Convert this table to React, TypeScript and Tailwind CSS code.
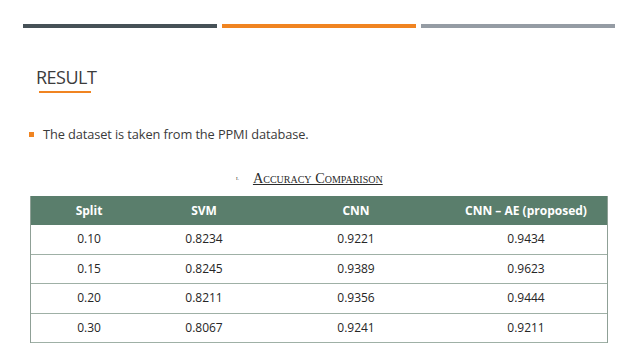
import React from "react";

const rows = [
  ["0.10", "0.8234", "0.9221", "0.9434"],
  ["0.15", "0.8245", "0.9389", "0.9623"],
  ["0.20", "0.8211", "0.9356", "0.9444"],
  ["0.30", "0.8067", "0.9241", "0.9211"],
];

export default function App() {
  return (
    <div
      className="w-[638px] h-[359px] bg-white overflow-hidden text-[#404040]"
      style={{ fontFamily: '"Open Sans", "Noto Sans", sans-serif' }}
    >
      <div className="flex gap-[5px] px-[23px] pt-[24px]">
        <div className="h-[4px] flex-1 bg-[#465157]" />
        <div className="h-[4px] flex-1 bg-[#f08421]" />
        <div className="h-[4px] flex-1 bg-[#959ca4]" />
      </div>

      <div className="pl-[36px] pt-[38px]">
        <div className="inline-flex flex-col items-start">
          <div className="text-[18px] leading-[22px] tracking-[-0.5px] text-[#3c3c3c]">RESULT</div>
          <div className="ml-[3px] mt-[3px] h-[2px] w-[52px] bg-[#f08421]" />
        </div>
      </div>

      <div className="flex items-center pl-[29px] mt-[32px]">
        <div className="w-[5px] h-[5px] bg-[#f08421]" />
        <div className="ml-[9px] text-[12.8px] leading-[18px] text-[#3a3a3a] tracking-[-0.1px]">
          The dataset is taken from the PPMI database.
        </div>
      </div>

      <div
        className="flex items-end mt-[26px] pl-[236px] text-[#2a2a2a]"
        style={{ fontFamily: '"Liberation Serif", serif' }}
      >
        <span className="text-[5px] mr-[14px] mb-[5px]">I.</span>
        <span
          className="text-[14.3px] leading-[18px] underline underline-offset-[1px]"
          style={{ fontVariant: "small-caps" }}
        >
          Accuracy Comparison
        </span>
      </div>

      <div className="mx-[30px] mt-[9px] w-[578px] border-x border-[#8fa096]">
        <div className="grid grid-cols-[116px_114px_190px_1fr] h-[29px] items-center bg-[#5a7e6c] text-white font-bold text-[12px]">
          <div className="text-center">Split</div>
          <div className="text-center">SVM</div>
          <div className="text-center">CNN</div>
          <div className="text-center pr-[6px]">CNN – AE (proposed)</div>
        </div>
        {rows.map((r, i) => (
          <div
            key={i}
            className="grid grid-cols-[116px_114px_190px_1fr] h-[29.5px] items-center border-b border-[#9fb0a6] text-[12px] text-[#262626]"
          >
            <div className="text-center">{r[0]}</div>
            <div className="text-center">{r[1]}</div>
            <div className="text-center">{r[2]}</div>
            <div className="text-center pr-[6px]">{r[3]}</div>
          </div>
        ))}
      </div>
    </div>
  );
}
